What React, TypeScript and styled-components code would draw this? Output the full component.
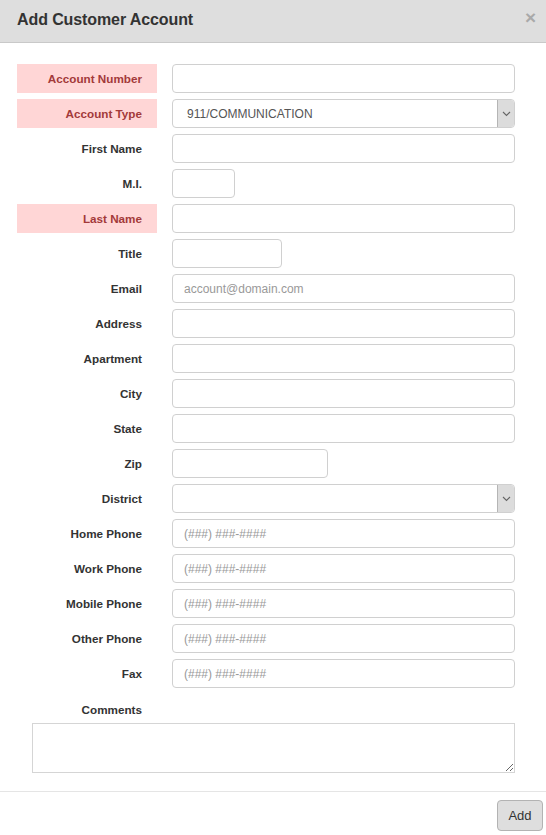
import React from "react";
import styled, { createGlobalStyle } from "styled-components";

const Global = createGlobalStyle`
  html, body { margin: 0; padding: 0; background: #fff; }
  body { font-family: "Liberation Sans", Arial, sans-serif; color: #333; }
  * { box-sizing: border-box; }
`;

const Modal = styled.div`
  width: 546px;
  height: 835px;
  background: #fff;
  display: flex;
  flex-direction: column;
`;

const Header = styled.div`
  height: 43px;
  background: #dedede;
  border-bottom: 1px solid #c9c9c9;
  display: flex;
  align-items: center;
  justify-content: space-between;
  padding: 0 10px 2px 17px;
`;

const Title = styled.h4`
  margin: 0;
  font-size: 16px;
  font-weight: bold;
  color: #333;
  letter-spacing: -0.1px;
`;

const Close = styled.button`
  border: 0;
  background: none;
  padding: 0;
  font-family: "Liberation Sans", Arial, sans-serif;
  font-size: 19px;
  font-weight: bold;
  line-height: 1;
  color: #a9a9a9;
  cursor: pointer;
  margin-top: -6px;
`;

const Body = styled.div`
  padding: 21px 31px 0 17px;
`;

const Row = styled.div`
  display: grid;
  grid-template-columns: 140px 1fr;
  column-gap: 15px;
  height: 29px;
  margin-bottom: 6px;
  align-items: stretch;
`;

const Label = styled.label<{ $required?: boolean }>`
  display: block;
  text-align: right;
  padding-right: 15px;
  line-height: 29px;
  font-size: 11.7px;
  font-weight: bold;
  color: ${(p) => (p.$required ? "#a33a3a" : "#333")};
  background: ${(p) => (p.$required ? "#ffd6d6" : "transparent")};
`;

const Input = styled.input<{ $width?: number }>`
  width: ${(p) => (p.$width ? `${p.$width}px` : "100%")};
  height: 29px;
  border: 1px solid #d0d0d0;
  border-radius: 4px;
  padding: 0 11px;
  font-family: "Liberation Sans", Arial, sans-serif;
  font-size: 12px;
  color: #555;
  background: #fff;
  outline: none;
  &::placeholder { color: #999; }
`;

const SelectWrap = styled.div`
  display: flex;
  height: 29px;
  border: 1px solid #d0d0d0;
  border-radius: 4px;
  overflow: hidden;
  background: #fff;
`;

const Select = styled.select`
  flex: 1;
  appearance: none;
  border: 0;
  outline: none;
  background: transparent;
  padding: 0 14px;
  font-family: "Liberation Sans", Arial, sans-serif;
  font-size: 12px;
  color: #555;
`;

const Arrow = styled.span`
  width: 17px;
  background: #dcdcdc;
  border-left: 1px solid #b5b5b5;
  display: flex;
  align-items: center;
  justify-content: center;
`;

const CommentsLabel = styled.div`
  width: 140px;
  height: 28px;
  text-align: right;
  padding-right: 15px;
  line-height: 31px;
  font-size: 11.7px;
  font-weight: bold;
  color: #333;
`;

const TextArea = styled.textarea`
  display: block;
  margin: 1px 0 0 15px;
  width: 483px;
  height: 50px;
  border: 1px solid #d5d5d5;
  border-radius: 0;
  outline: none;
  font-family: "Liberation Sans", Arial, sans-serif;
  font-size: 12px;
`;

const Footer = styled.div`
  margin-top: 18px;
  border-top: 1px solid #e5e5e5;
  padding: 8px 3px 0 0;
  display: flex;
  justify-content: flex-end;
`;

const Button = styled.button`
  width: 46px;
  height: 31px;
  background: #dedede;
  border: 1px solid #b3b3b3;
  border-radius: 4px;
  font-family: "Liberation Sans", Arial, sans-serif;
  font-size: 13px;
  color: #333;
  padding: 0;
`;

type Field = {
  label: string;
  required?: boolean;
  width?: number;
  placeholder?: string;
  select?: string;
};

const fields: Field[] = [
  { label: "Account Number", required: true },
  { label: "Account Type", required: true, select: "911/COMMUNICATION" },
  { label: "First Name" },
  { label: "M.I.", width: 63 },
  { label: "Last Name", required: true },
  { label: "Title", width: 110 },
  { label: "Email", placeholder: "account@domain.com" },
  { label: "Address" },
  { label: "Apartment" },
  { label: "City" },
  { label: "State" },
  { label: "Zip", width: 156 },
  { label: "District", select: "" },
  { label: "Home Phone", placeholder: "(###) ###-####" },
  { label: "Work Phone", placeholder: "(###) ###-####" },
  { label: "Mobile Phone", placeholder: "(###) ###-####" },
  { label: "Other Phone", placeholder: "(###) ###-####" },
  { label: "Fax", placeholder: "(###) ###-####" },
];

const Chevron = () => (
  <svg width="9" height="6" viewBox="0 0 9 6">
    <path d="M1 1l3.5 3.5L8 1" fill="none" stroke="#666" strokeWidth="1.1" />
  </svg>
);

export default function App() {
  return (
    <>
      <Global />
      <Modal>
        <Header>
          <Title>Add Customer Account</Title>
          <Close aria-label="Close">×</Close>
        </Header>
        <Body>
          {fields.map((f) => (
            <Row key={f.label}>
              <Label $required={f.required}>{f.label}</Label>
              <div>
                {f.select !== undefined ? (
                  <SelectWrap>
                    <Select defaultValue={f.select}>
                      <option value={f.select}>{f.select}</option>
                    </Select>
                    <Arrow>
                      <Chevron />
                    </Arrow>
                  </SelectWrap>
                ) : (
                  <Input $width={f.width} placeholder={f.placeholder} />
                )}
              </div>
            </Row>
          ))}
          <CommentsLabel>Comments</CommentsLabel>
          <TextArea />
        </Body>
        <Footer>
          <Button>Add</Button>
        </Footer>
      </Modal>
    </>
  );
}
